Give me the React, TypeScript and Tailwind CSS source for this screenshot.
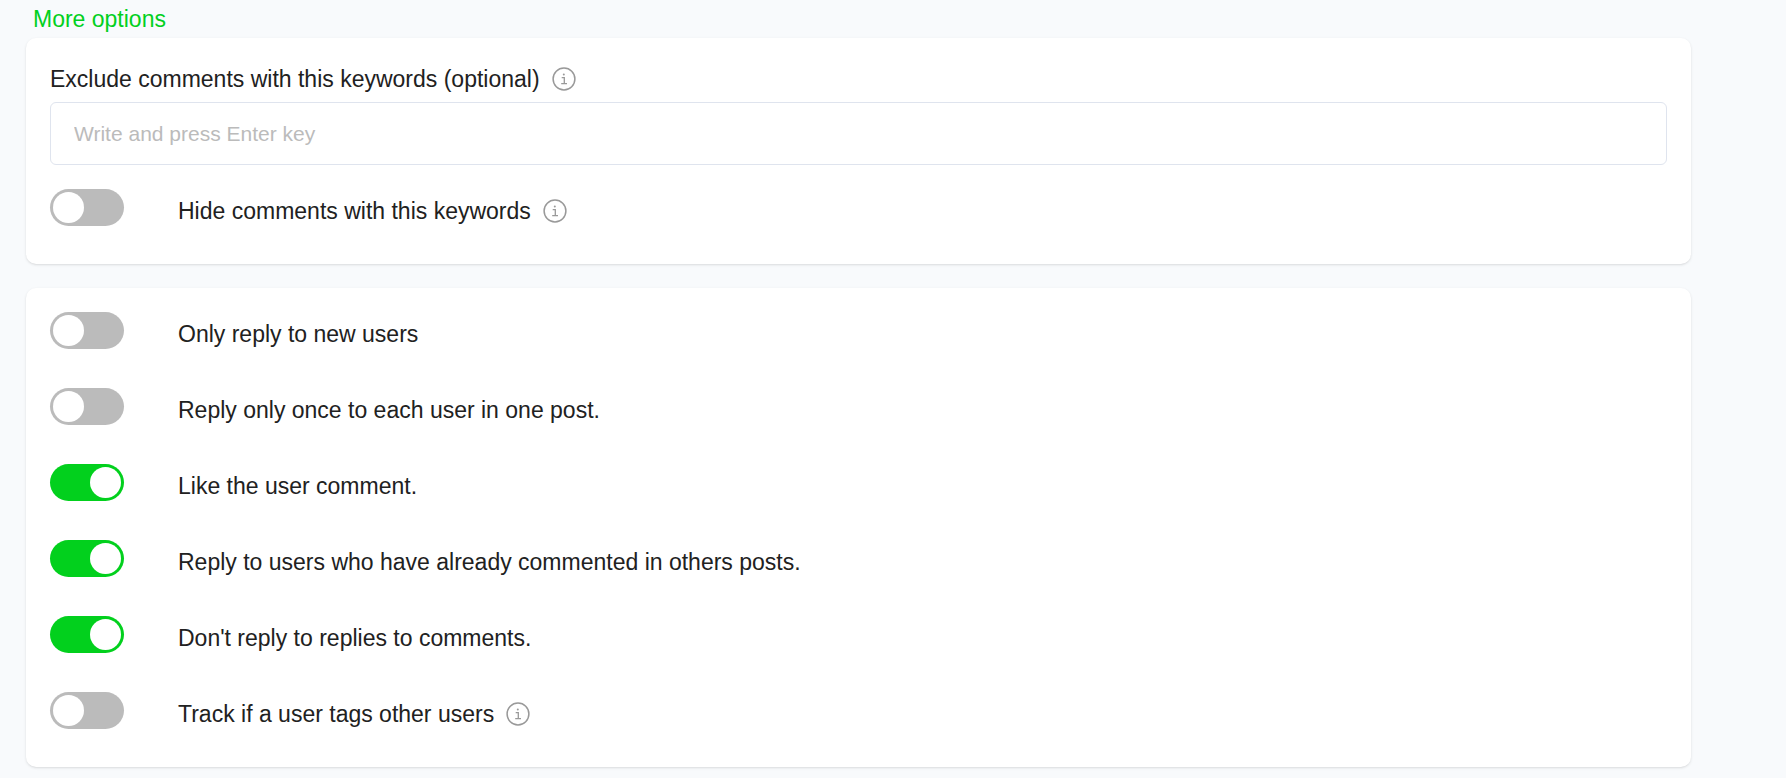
import { useState } from "react";

function InfoIcon() {
    return (
        <svg className="w-6 h-6 shrink-0 text-[#999999]" viewBox="0 0 24 24" fill="none" stroke="currentColor" aria-hidden="true">
            <circle cx="12" cy="12" r="10.9" strokeWidth="1.5" />
            <circle cx="11.8" cy="7.4" r="1" fill="currentColor" stroke="none" />
            <path d="M9.7 10.6h2.6v6M9.2 16.7h5.8" strokeWidth="1.3" />
        </svg>
    );
}

type OptionProps = {
    id: string;
    label: string;
    defaultOn?: boolean;
    info?: boolean;
};

function Option({ id, label, defaultOn = false, info = false }: OptionProps) {
    const [on, setOn] = useState(defaultOn);

    return (
        <div className="flex items-start h-[37px]">
            <input
                id={id}
                type="checkbox"
                role="switch"
                checked={on}
                onChange={(e) => setOn(e.target.checked)}
                className="appearance-none flex items-center shrink-0 w-[74px] h-[37px] p-[3px] rounded-full cursor-pointer bg-[#bbbbbb] checked:bg-[#02d01d] checked:justify-end before:block before:w-[31px] before:h-[31px] before:rounded-full before:bg-white"
            />
            <label htmlFor={id} className="flex items-center gap-3 ml-[54px] pt-[7px] leading-[30px]">
                {label}
                {info && <InfoIcon />}
            </label>
        </div>
    );
}

export default function App() {
    return (
        <main className="min-h-screen bg-[#f8fafc] pl-[26px] pr-[95px] pb-[11px] font-['Liberation_Sans',Arial,sans-serif] text-[23px] text-[#212121]">
            <h2 className="h-[38px] px-[7px] pt-1 leading-[30px] text-[#02d01d]">More options</h2>

            {/* Keyword filter */}
            <section className="bg-white rounded-[10px] shadow px-6 pt-6 pb-[38px] mb-6">
                <label htmlFor="keywords" className="flex items-center gap-3 pt-[2px] pb-2 leading-[30px]">
                    Exclude comments with this keywords (optional)
                    <InfoIcon />
                </label>
                <input
                    id="keywords"
                    type="text"
                    placeholder="Write and press Enter key"
                    className="block w-full h-[63px] mb-6 px-[23px] text-[21px] border border-[#dfe4ee] rounded-md outline-none placeholder:text-[#bbbbbb]"
                />
                <Option id="hide" label="Hide comments with this keywords" info />
            </section>

            {/* Reply behaviour */}
            <section className="flex flex-col gap-[39px] bg-white rounded-[10px] shadow px-6 pt-6 pb-[38px]">
                <Option id="new-users" label="Only reply to new users" />
                <Option id="once" label="Reply only once to each user in one post." />
                <Option id="like" label="Like the user comment." defaultOn />
                <Option id="already" label="Reply to users who have already commented in others posts." defaultOn />
                <Option id="replies" label="Don't reply to replies to comments." defaultOn />
                <Option id="tags" label="Track if a user tags other users" info />
            </section>
        </main>
    );
}
